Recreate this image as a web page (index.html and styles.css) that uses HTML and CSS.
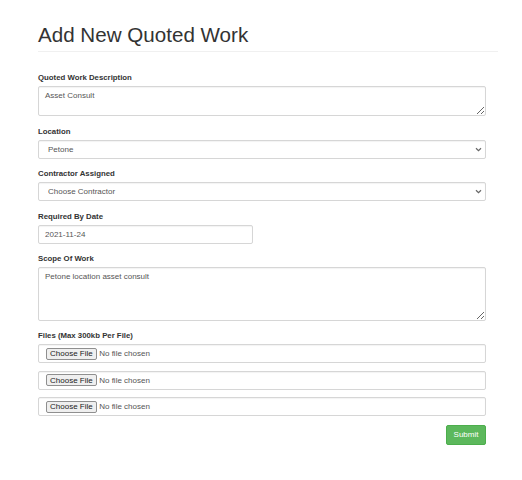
FILE: index.html
```html
<!DOCTYPE html>
<html lang="en">
<head>
<meta charset="utf-8">
<title>Add New Quoted Work</title>
<link rel="stylesheet" href="styles.css">
</head>
<body>
<div class="page">
  <div class="page-header">
    <h1 class="title">Add New Quoted Work</h1>
  </div>
  <form class="form">
    <div class="group">
      <label class="label">Quoted Work Description</label>
      <textarea class="control area-sm">Asset Consult</textarea>
    </div>
    <div class="group">
      <label class="label">Location</label>
      <div class="select-wrap">
        <select class="control select"><option>Petone</option></select>
        <svg class="chevron" width="7" height="5" viewBox="0 0 7 5"><path d="M1 1.2 L3.5 3.6 L6 1.2" fill="none" stroke="#666" stroke-width="1.2"/></svg>
      </div>
    </div>
    <div class="group">
      <label class="label">Contractor Assigned</label>
      <div class="select-wrap">
        <select class="control select"><option>Choose Contractor</option></select>
        <svg class="chevron" width="7" height="5" viewBox="0 0 7 5"><path d="M1 1.2 L3.5 3.6 L6 1.2" fill="none" stroke="#666" stroke-width="1.2"/></svg>
      </div>
    </div>
    <div class="group">
      <label class="label">Required By Date</label>
      <input class="control input date" type="text" value="2021-11-24">
    </div>
    <div class="group">
      <label class="label">Scope Of Work</label>
      <textarea class="control area-lg">Petone location asset consult</textarea>
    </div>
    <div class="group files">
      <label class="label">Files (Max 300kb Per File)</label>
      <input class="control file" type="file">
      <input class="control file" type="file">
      <input class="control file" type="file">
    </div>
    <div class="actions">
      <button type="button" class="submit">Submit</button>
    </div>
  </form>
</div>
</body>
</html>
```

FILE: styles.css
```css
html, body {
  margin: 0;
  padding: 0;
  background: #ffffff;
}
body {
  font-family: "Liberation Sans", Arial, sans-serif;
  color: #333333;
}
.page {
  padding: 22.7px 0 0 38px;
  width: 460px;
}
.page-header {
  border-bottom: 1px solid #f0f0f0;
  padding-bottom: 5.2px;
}
.title {
  margin: 0;
  font-size: 20.6px;
  line-height: 23px;
  font-weight: normal;
  color: #333333;
}
.form {
  width: 448px;
  padding-top: 20.5px;
}
.group {
  display: flex;
  flex-direction: column;
  margin-bottom: 9.7px;
}
.label {
  font-size: 7.8px;
  line-height: 11px;
  font-weight: bold;
  margin-bottom: 3px;
  color: #333333;
}
.control {
  box-sizing: border-box;
  width: 100%;
  margin: 0;
  border: 1px solid #d6d6d6;
  border-radius: 2px;
  background: #ffffff;
  box-shadow: inset 0 1px 1px rgba(0,0,0,0.05);
  font-family: "Liberation Sans", Arial, sans-serif;
  font-size: 8px;
  color: #555555;
  padding: 0 6px;
  outline: none;
}
.area-sm {
  height: 30px;
  padding-top: 4px;
  resize: vertical;
  display: block;
}
.area-lg {
  height: 53.4px;
  padding-top: 4px;
  resize: vertical;
  display: block;
}
.select-wrap {
  position: relative;
}
.select {
  display: block;
  height: 18.6px;
  padding-left: 9px;
  appearance: none;
  -webkit-appearance: none;
}
.chevron {
  position: absolute;
  right: 4px;
  top: 7px;
}
.input {
  height: 19px;
}
.date {
  width: 215.3px;
}
.files .file {
  height: 19px;
  padding: 0 6.5px;
  line-height: 17px;
  margin-bottom: 7.4px;
}
.files .file:last-child {
  margin-bottom: 0;
}
.files {
  margin-bottom: 8.6px;
}
.file::file-selector-button {
  font-family: "Liberation Sans", Arial, sans-serif;
  font-size: 8px;
  height: 12px;
  padding: 0 3.5px;
  margin: 0 2px 0 0;
  border: 1px solid #8f8f8f;
  border-radius: 2px;
  background: #efefef;
  color: #222222;
}
.actions {
  display: flex;
  justify-content: flex-end;
}
.submit {
  width: 40px;
  height: 20px;
  padding: 0;
  border: 1px solid #4cae4c;
  border-radius: 2px;
  background: #5cb85c;
  color: #ffffff;
  font-family: "Liberation Sans", Arial, sans-serif;
  font-size: 8px;
}
```
